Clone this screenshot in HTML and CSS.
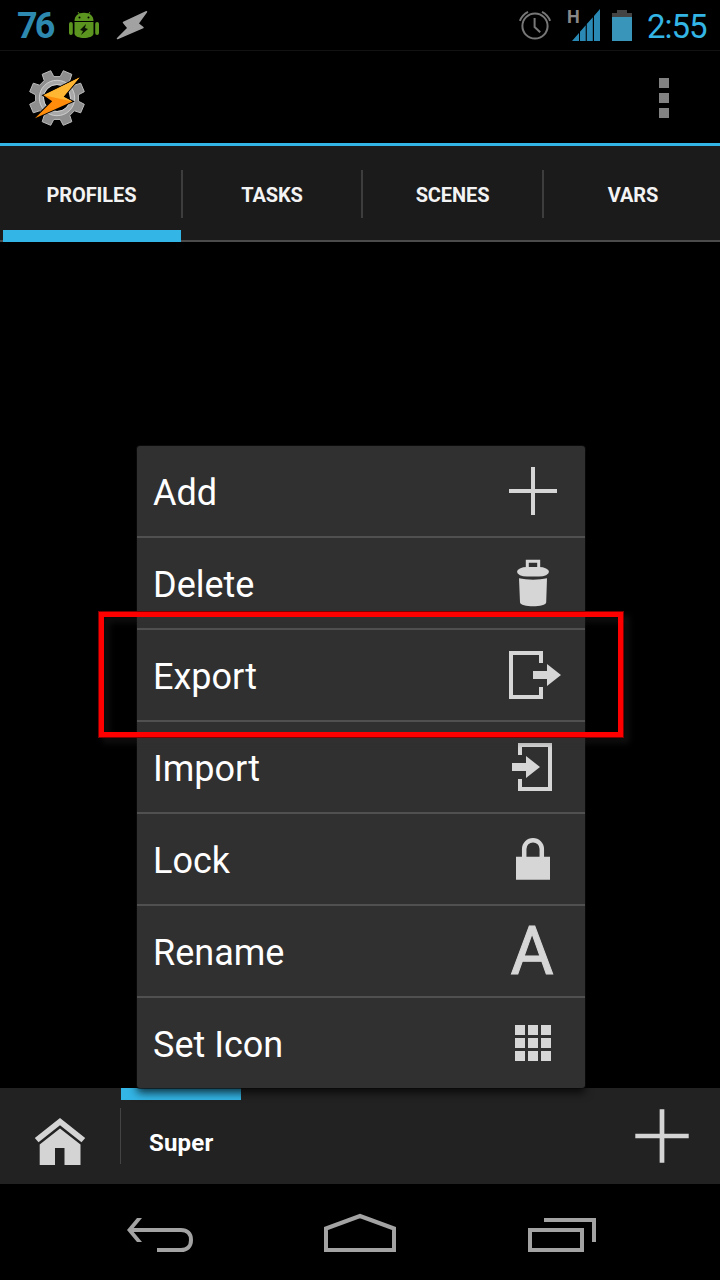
FILE: index.html
```
<!DOCTYPE html>
<html lang="en">
<head>
  <meta charset="UTF-8">
  <title>Tasker</title>
  <link rel="stylesheet" href="styles.css">
</head>
<body>
  <div class="screen">

    <div class="status-bar">
      <div class="status-left">
        <span class="battery-level">76</span>
        <svg class="status-icon" width="32" height="28" viewBox="0 0 32 28">
          <g fill="#5c9420">
            <path d="M6.500 10C6.500 5 10 1.800 16 1.800S25.500 5 25.500 10z"/>
            <path d="M6.500 11h19v11.500c0 3-5 4.500-9.500 4.500s-9.500-1.500-9.500-4.500z"/>
            <rect x="1" y="11" width="3.800" height="13" rx="1.900"/>
            <rect x="27.200" y="11" width="3.800" height="13" rx="1.900"/>
          </g>
          <path d="M10 1l2 3M22 1l-2 3" stroke="#5c9420" stroke-width="1"/>
          <circle cx="11.500" cy="6.500" r="1" fill="#000"/>
          <circle cx="20.500" cy="6.500" r="1" fill="#000"/>
          <path d="M18 13l-6 6 3 1-2 4 7-6-3-1z" fill="#0b1402"/>
        </svg>
        <svg class="status-icon" width="32" height="30" viewBox="0 0 32 30">
          <path d="M30.500 1.800L7.500 12.500l4.500 5.500L1.500 28.500l25.500-11-5-4z" fill="#a2a2a2" stroke="#a2a2a2" stroke-width="1.500" stroke-linejoin="round"/>
        </svg>
      </div>
      <div class="status-right">
        <svg width="34" height="34" viewBox="0 0 34 34" fill="none" stroke="#777" stroke-width="2">
          <circle cx="17" cy="18" r="12.600"/>
          <path d="M16.600 10v9l5.600 5.300"/>
          <path d="M1.900 12.800A17 17 0 0 1 10 3.800M32.100 12.800A17 17 0 0 0 24 3.800"/>
        </svg>
        <span class="network">H</span>
        <svg class="signal" width="28" height="32" viewBox="0 0 28 32">
          <path d="M0 32L7 24V32zM8 32v-9.200l5.700-6.500V32zM14.800 32V15l6-6.800V32zM22 32V6.900L28 0v32z" fill="#2b8ab5"/>
        </svg>
        <svg class="battery" width="20" height="31" viewBox="0 0 20 31">
          <path d="M5 0h10v3h5v4H0V3h5z" fill="#444"/>
          <path d="M0 7h20v24H0z" fill="#3a95bb"/>
        </svg>
        <span class="clock">2:55</span>
      </div>
    </div>

    <div class="action-bar">
      <svg width="64" height="64" viewBox="-32 -32 64 64">
        <path d="M-3.200-21.400L-6.300-27.300L-14.800-23.700L-12.800-17.400L-17.400-12.800L-23.700-14.800L-27.300-6.300L-21.400-3.200V3.200L-27.300 6.300L-23.700 14.800L-17.400 12.800L-12.800 17.400L-14.800 23.700L-6.300 27.300L-3.200 21.400H3.200L6.300 27.300L14.800 23.700L12.800 17.400L17.400 12.800L23.700 14.800L27.300 6.300L21.400 3.200V-3.200L27.300-6.300L23.700-14.800L17.400-12.800L12.800-17.400L14.800-23.700L6.300-27.300L3.200-21.400z" fill="#8e8e8e" stroke="#bdbdbd"/>
        <circle r="15.500" fill="#000" stroke="#a8a8a8" stroke-width="5"/>
        <circle r="17.700" fill="none" stroke="#ccc" stroke-width="1"/>
        <circle r="13.500" fill="none" stroke="#d0d0d0" stroke-width="1"/>
        <path class="bolt" d="M22.500-20.500L-13.500-2.700l8.700 6L-22 20.200L15.500 3.500L6.500-1.300z" fill="#ff8c0a" stroke="#000" stroke-width="2"/>
        <path d="M22.500-20.500L-13.500-2.700L15.500 3.500L6.500-1.300z" fill="#ffb733"/>
      </svg>
      <div class="overflow">
        <i></i>
        <i></i>
        <i></i>
      </div>
    </div>

    <div class="tabs">
      <div class="tab active"><span>PROFILES</span></div>
      <div class="tab"><span>TASKS</span></div>
      <div class="tab"><span>SCENES</span></div>
      <div class="tab"><span>VARS</span></div>
    </div>

    <div class="content"></div>

    <div class="project-bar">
      <svg class="home" width="52" height="48" viewBox="0 0 52 48">
        <path d="M26 0L.8 20l3.700 4.300L26 7.300l21.500 17 3.700-4.300z" fill="#d4d4d4"/>
        <path d="M26 10.500L5.700 26.500V47H21V30h9.500v17h16V26.500z" fill="#d4d4d4"/>
      </svg>
      <div class="project"><span>Super</span></div>
      <svg class="add" width="56" height="56" viewBox="0 0 56 56">
        <path d="M28 1.300v53.400M1.300 28h53.400" stroke="#d4d4d4" stroke-width="4.700"/>
      </svg>
    </div>

    <div class="nav-bar">
      <svg width="80" height="48" viewBox="0 0 80 48" fill="none" stroke="#a3a3a3" stroke-width="4">
        <path d="M10 22h51c6 0 10 3.500 10 10s-4 10-10 10H37"/>
        <path d="M22 10h-5L7 22l10 12h5L12 22z" fill="#a3a3a3" stroke="none"/>
      </svg>
      <svg width="80" height="48" viewBox="0 0 80 48" fill="none" stroke="#a3a3a3" stroke-width="4">
        <path d="M6 42V20.500L40 8l34 12.500V42z"/>
      </svg>
      <svg width="80" height="48" viewBox="0 0 80 48" fill="none" stroke="#a3a3a3" stroke-width="4">
        <path d="M10 22h52v20H10z"/>
        <path d="M24 12h50v22"/>
      </svg>
    </div>

    <!-- project long press menu -->
    <div class="menu">
      <div class="menu-item">
        <span>Add</span>
        <svg width="56" height="56" viewBox="0 0 56 56">
          <path d="M28 4v48M4 28h48" stroke="#d6d6d6" stroke-width="4"/>
        </svg>
      </div>
      <div class="menu-item">
        <span>Delete</span>
        <svg width="56" height="56" viewBox="0 0 56 56" fill="#d6d6d6">
          <path d="M22.300 14V6.200h11.400V14" fill="none" stroke="#d6d6d6" stroke-width="3"/>
          <rect x="12" y="12" width="32" height="9.600" rx="10" ry="4.800"/>
          <path d="M14 23.300c8 1.800 20 1.800 28 0l-.8 24c0 5.400-26.200 5.400-26.200 0z"/>
        </svg>
      </div>
      <div class="menu-item">
        <span>Export</span>
        <svg width="56" height="56" viewBox="0 0 56 56" fill="#d6d6d6">
          <path d="M36 16V6H6v44h30V40" fill="none" stroke="#d6d6d6" stroke-width="4"/>
          <path d="M28 24h14v-7l14 11-14 11v-7H28z"/>
        </svg>
      </div>
      <div class="menu-item">
        <span>Import</span>
        <svg width="56" height="56" viewBox="0 0 56 56" fill="#d6d6d6">
          <path d="M15 16V6h30v44H15V40" fill="none" stroke="#d6d6d6" stroke-width="4"/>
          <path d="M7 24h14v-7l14 11-14 11v-7H7z"/>
        </svg>
      </div>
      <div class="menu-item">
        <span>Lock</span>
        <svg width="56" height="56" viewBox="0 0 56 56" fill="#d6d6d6">
          <path d="M19.200 27V18a8.800 8.800 0 0 1 17.600 0v9" fill="none" stroke="#d6d6d6" stroke-width="4.500"/>
          <path d="M11 25.800h34v23H11z"/>
        </svg>
      </div>
      <div class="menu-item">
        <span>Rename</span>
        <span class="letter">A</span>
      </div>
      <div class="menu-item">
        <span>Set Icon</span>
        <svg width="56" height="56" viewBox="0 0 56 56" fill="#d6d6d6">
          <path d="M10 10h10v10H10zM23 10h10v10H23zM36 10h10v10H36zM10 23h10v10H10zM23 23h10v10H23zM36 23h10v10H36zM10 36h10v10H10zM23 36h10v10H23zM36 36h10v10H36z"/>
        </svg>
      </div>
      <div class="highlight"></div>
    </div>

  </div>
</body>
</html>
```
FILE: styles.css
```
* {
  box-sizing: border-box;
}
body {
  margin: 0;
  background: #000;
  font-family: Roboto, sans-serif;
  color: #fff;
}
svg {
  display: block;
  flex: none;
}
.screen {
  position: relative;
  width: 720px;
  height: 1280px;
  display: flex;
  flex-direction: column;
  overflow: hidden;
}

/* status bar */
.status-bar {
  height: 51px;
  border-bottom: 1px solid #121212;
  display: flex;
  justify-content: space-between;
  padding: 0 13px 0 17px;
}
.status-left, .status-right {
  display: flex;
  align-items: center;
}
.battery-level {
  width: 51px;
  padding-top: 2px;
  font-size: 36px;
  font-weight: bold;
  letter-spacing: -3px;
  color: #2d89af;
}
.status-icon {
  margin-right: 16px;
}
.network {
  align-self: flex-start;
  margin-top: 6px;
  width: 12px;
  margin-left: 15px;
  font-size: 18px;
  font-weight: bold;
  color: #888;
}
.signal {
  margin-left: -7px;
}
.battery {
  margin: 0 15px 0 12px;
}
.clock {
  width: 60px;
  padding-top: 2px;
  font-size: 33px;
  letter-spacing: -1px;
  color: #33b5e5;
}

/* title */
.action-bar {
  height: 95px;
  border-bottom: 3px solid #33b5e5;
  display: flex;
  align-items: center;
  justify-content: space-between;
  padding: 2px 51px 0 25px;
}
.bolt {
  paint-order: stroke;
}
.overflow {
  display: flex;
  flex-direction: column;
  gap: 5px;
}
.overflow i {
  width: 10px;
  height: 10px;
  background: #828282;
}

/* tabs */
.tabs {
  height: 96px;
  display: grid;
  grid-template-columns: 183px 180px 181px 176px;
  background: #1b1b1b;
  box-shadow: inset 0 -2px #4b4b4b;
}
.tab {
  display: flex;
  flex-direction: column;
  align-items: center;
  padding-top: 24px;
  font-size: 20px;
  font-weight: bold;
  color: #f3f3f3;
}
.tab span {
  width: 100%;
  height: 48px;
  line-height: 50px;
  text-align: center;
  letter-spacing: -0.1px;
  border-right: 2px solid #3d3d3d;
}
.tab.active span, .tab:last-child span {
  padding-left: 2px;
}
.tab:last-child span {
  border-right: none;
}
.tab.active::after {
  content: "";
  width: 178px;
  height: 12px;
  margin: 12px 0 0 1px;
  background: #33b5e5;
}

.content {
  flex: 1;
}

/* bottom bar */
.project-bar {
  height: 96px;
  background: #222;
  display: flex;
  padding-right: 30px;
}
.home {
  margin: 30px 34px 0;
}
.project {
  width: 121px;
  display: flex;
  flex-direction: column;
  font-size: 24px;
  font-weight: bold;
}
.project::before {
  content: "";
  height: 12px;
  margin: 0 0 8px 1px;
  background: #33b5e5;
}
.project span {
  height: 56px;
  line-height: 71px;
  padding-left: 28px;
  letter-spacing: 0.2px;
  border-left: 1px solid #444;
}
.add {
  margin: 20px 0 0 auto;
}
.nav-bar {
  height: 96px;
  display: flex;
  align-items: center;
  gap: 120px;
  padding-left: 120px;
}

/* popup menu */
.menu {
  position: absolute;
  left: 137px;
  top: 446px;
  width: 448px;
  background: #303030;
  border-radius: 3px;
  box-shadow: 0 5px 9px rgba(0,0,0,0.7), 0 0 0 1px rgba(20,20,20,0.6);
}
.menu-item {
  height: 92px;
  display: flex;
  align-items: center;
  justify-content: space-between;
  padding: 0 24px 0 16px;
  font-size: 36px;
  border-bottom: 2px solid #505050;
}
.menu-item:nth-child(7) {
  height: 90px;
  border-bottom: none;
}
.menu-item span {
  line-height: 42px;
  padding-top: 4px;
}
.menu-item .letter {
  width: 56px;
  padding: 1px 2px 0 0;
  text-align: center;
  font-size: 66px;
  line-height: 80px;
  color: #d6d6d6;
  -webkit-text-stroke: 1px #d6d6d6;
}
.highlight {
  position: absolute;
  left: -39px;
  top: 165px;
  width: 526px;
  height: 127px;
  border: 6px solid #f00;
  outline: 1px solid rgba(0,0,0,0.5);
  outline-offset: -1px;
  filter: drop-shadow(5px 5px 3px rgba(50,50,50,0.35));
}
```
